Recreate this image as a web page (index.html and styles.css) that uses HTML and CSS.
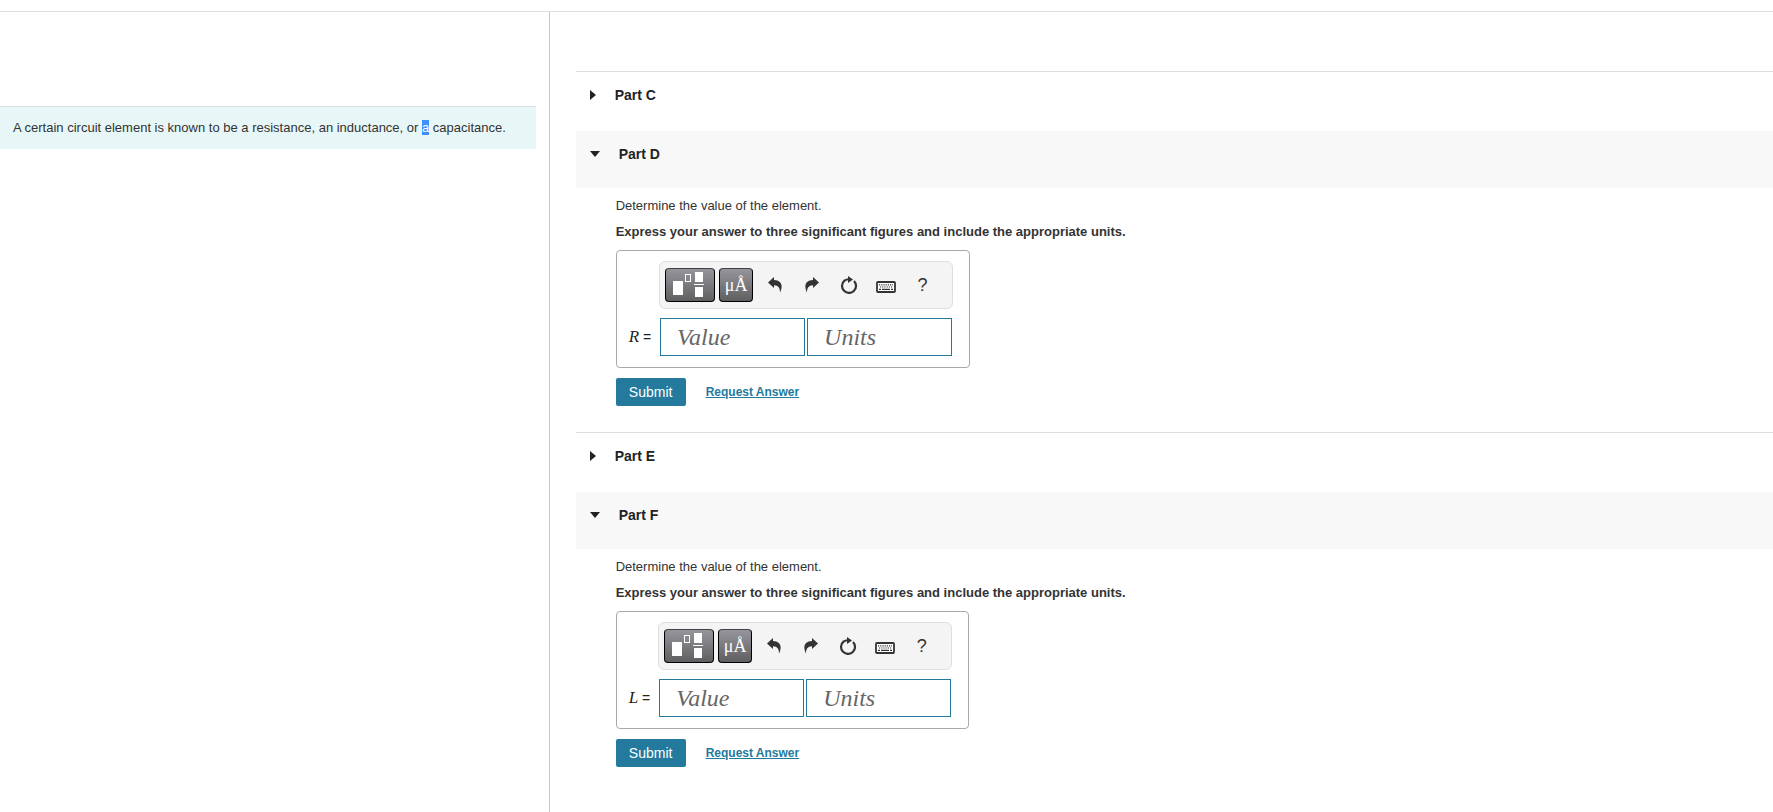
FILE: index.html
```
<!DOCTYPE html>
<html lang="en">

<head>
  <meta charset="utf-8">
  <title>Circuit element</title>
  <link rel="stylesheet" href="styles.css">
</head>
<body>
  <!-- shared icons -->
  <svg class="sprite" aria-hidden="true">
    <symbol id="template" viewBox="0 0 34 28">
      <rect x="0" y="10" width="10" height="14" fill="#fff"/>
      <rect x="12.5" y="3.5" width="5" height="7" fill="none" stroke="#fff"/>
      <rect x="22" y="1" width="8" height="10" fill="#fff"/>
      <rect x="21" y="13" width="10" height="1" fill="#fff"/>
      <rect x="22" y="16" width="8" height="10" fill="#fff"/>
    </symbol>
    <symbol id="undo" viewBox="0 0 14 16">
      <path d="M0 5.5 L6 0 V3 C11 3 14 6 13.6 10 C13.5 12 12.9 13.8 12 15.5 C12 11 10.5 8.4 6 8.2 V11 Z"/>
    </symbol>
    <symbol id="redo" viewBox="0 0 14 16">
      <path d="M14 5.5 L8 0 V3 C3 3 0 6 .4 10 C.5 12 1.1 13.8 2 15.5 C2 11 3.5 8.4 8 8.2 V11 Z"/>
    </symbol>
    <symbol id="reset" viewBox="0 0 18 18">
      <path d="M14 5 A7 7 0 1 1 4.5 4.6 Q6.5 3 10 3.3" fill="none" stroke="#333" stroke-width="2.2"/>
      <path d="M8 0 L13 3.6 L8 7 Z"/>
    </symbol>
    <symbol id="keyboard" viewBox="0 0 20 16">
      <rect x="1" y="5" width="18" height="10" rx="1" fill="#fff" stroke="#333" stroke-width="1.8"/>
      <path d="M3 7.8 H17 M4 10 H17" fill="none" stroke="#333" stroke-width="1.2" stroke-dasharray="1.2 1"/>
      <path d="M3 12.3 H5 M6 12.3 H14 M15 12.3 H17" fill="none" stroke="#333" stroke-width="1.2"/>
    </symbol>
    <symbol id="right" viewBox="0 0 6 10">
      <path d="M0 0 L6 5 L0 10 Z"/>
    </symbol>
    <symbol id="down" viewBox="0 0 10 6">
      <path d="M0 0 H10 L5 6 Z"/>
    </symbol>
  </svg>

  <div class="page">
    <aside class="intro">
      <p class="problem">A certain circuit element is known to be a resistance, an inductance, or <span class="selected">a</span> capacitance.</p>
    </aside>

    <main class="parts">
      <section>
        <button class="part-head" aria-expanded="false"><svg class="right"><use href="#right"/></svg>Part C</button>
      </section>

      <section>
        <button class="part-head open" aria-expanded="true"><svg class="down"><use href="#down"/></svg>Part D</button>
        <div class="part-body">
          <p>Determine the value of the element.</p>
          <p class="instruction">Express your answer to three significant figures and include the appropriate units.</p>
          <div class="answer">
            <div class="toolbar">
              <button class="key wide" aria-label="Templates"><svg class="template"><use href="#template"/></svg></button>
              <button class="key">μÅ</button>
              <button class="tool" aria-label="Undo"><svg class="arrow"><use href="#undo"/></svg></button>
              <button class="tool" aria-label="Redo"><svg class="arrow"><use href="#redo"/></svg></button>
              <button class="tool" aria-label="Reset"><svg class="reset"><use href="#reset"/></svg></button>
              <button class="tool" aria-label="Keyboard"><svg class="keyboard"><use href="#keyboard"/></svg></button>
              <button class="tool">?</button>
            </div>
            <label for="valueD"><i>R</i> =</label>
            <div class="fields">
              <input id="valueD" type="text" placeholder="Value">
              <input type="text" placeholder="Units" aria-label="Units">
            </div>
          </div>
          <div class="actions">
            <button class="submit">Submit</button>
            <a href="#">Request Answer</a>
          </div>
        </div>
      </section>

      <section>
        <button class="part-head" aria-expanded="false"><svg class="right"><use href="#right"/></svg>Part E</button>
      </section>

      <section>
        <button class="part-head open" aria-expanded="true"><svg class="down"><use href="#down"/></svg>Part F</button>
        <div class="part-body">
          <p>Determine the value of the element.</p>
          <p class="instruction">Express your answer to three significant figures and include the appropriate units.</p>
          <div class="answer">
            <div class="toolbar">
              <button class="key wide" aria-label="Templates"><svg class="template"><use href="#template"/></svg></button>
              <button class="key">μÅ</button>
              <button class="tool" aria-label="Undo"><svg class="arrow"><use href="#undo"/></svg></button>
              <button class="tool" aria-label="Redo"><svg class="arrow"><use href="#redo"/></svg></button>
              <button class="tool" aria-label="Reset"><svg class="reset"><use href="#reset"/></svg></button>
              <button class="tool" aria-label="Keyboard"><svg class="keyboard"><use href="#keyboard"/></svg></button>
              <button class="tool">?</button>
            </div>
            <label for="valueF"><i>L</i> =</label>
            <div class="fields">
              <input id="valueF" type="text" placeholder="Value">
              <input type="text" placeholder="Units" aria-label="Units">
            </div>
          </div>
          <div class="actions">
            <button class="submit">Submit</button>
            <a href="#">Request Answer</a>
          </div>
        </div>
      </section>
    </main>
  </div>
</body>
</html>
```
FILE: styles.css
```
* {
  box-sizing: border-box;
}
body {
  margin: 0;
  padding-top: 11px;
  background-color: #fff;
  color: #333;
  font-family: "Liberation Sans", Arial, sans-serif;
  font-size: 13px;
  line-height: 18px;
}
p {
  margin: 0;
}
button {
  font-family: inherit;
  border: none;
  padding: 0;
  cursor: pointer;
}
svg {
  display: block;
  fill: #333;
}
.sprite {
  display: none;
}
.page {
  display: grid;
  grid-template-columns: 31fr 69fr;
  min-height: calc(100vh - 11px);
  border-top: 1px solid #dcdfe0;
}

/* left column */
.intro {
  padding: 94px 14px 0 0;
}
.problem {
  padding: 12px 13px;
  border-top: 1px solid #d9dedd;
  background-color: #e7f7f7;
}
.selected {
  background-color: #3e90ff;
  color: #fff;
}

/* right column */
.parts {
  margin-left: -1px;
  border-left: 1px solid #c0c8d6;
  padding: 59px 0 32px 26px;
}
.part-head {
  display: flex;
  align-items: flex-start;
  gap: 19px;
  width: 100%;
  height: 60px;
  padding: 14px;
  border-top: 1px solid #dcdfe0;
  background-color: #fff;
  color: #222;
  font-size: 14px;
  font-weight: bold;
  line-height: 18px;
}
.part-head svg {
  fill: #222;
}
.open {
  height: 57px;
  border-top: none;
  background-color: #f8f8f8;
}
.right {
  width: 6px;
  height: 18px;
}
.down {
  width: 10px;
  height: 18px;
}
.part-body {
  padding: 9px 0 26px 40px;
}
.instruction {
  margin-top: 8px;
  font-weight: bold;
}
.answer {
  display: grid;
  grid-template-columns: auto auto;
  width: max-content;
  align-items: center;
  gap: 9px 8px;
  margin-top: 9px;
  padding: 10px 16px 11px 12px;
  border: 1px solid #a8a8a8;
  border-radius: 4px;
}
.toolbar {
  grid-column: 2;
  display: flex;
  align-items: center;
  gap: 4px;
  height: 48px;
  padding: 0 5px;
  border: 1px solid #dedede;
  border-radius: 6px;
  background-color: #f4f4f4;
}
.key {
  display: flex;
  align-items: center;
  justify-content: center;
  width: 34px;
  height: 34px;
  border: 1px solid #000;
  border-top-color: #444;
  border-radius: 4px;
  background-image: linear-gradient(#96959c, #5f5f61);
  color: #fff;
  font-family: "Liberation Serif", "Times New Roman", serif;
  font-size: 18px;
}
.wide {
  width: 50px;
}
.template {
  width: 34px;
  height: 28px;
}
.tool {
  display: flex;
  justify-content: center;
  width: 33px;
  background-color: transparent;
  color: #333;
  font-size: 18px;
}
.key + .tool {
  margin-left: 1px;
}
.arrow {
  width: 14px;
  height: 16px;
}
.reset {
  width: 18px;
  height: 18px;
}
.keyboard {
  width: 20px;
  height: 16px;
}
.answer label {
  color: #222;
  font-size: 14px;
}
.answer label i {
  font-family: "Liberation Serif", "Times New Roman", serif;
  font-size: 17px;
}
.fields {
  display: flex;
  gap: 2px;
  padding: 0 1px;
}
.fields input {
  width: 145px;
  height: 38px;
  padding: 0 16px;
  border: 1px solid #227a9c;
  font-family: "Liberation Serif", "Times New Roman", serif;
  font-size: 24px;
}
.fields input::placeholder {
  color: #666;
  font-style: italic;
}
.actions {
  display: flex;
  align-items: center;
  gap: 20px;
  margin-top: 10px;
}
.submit {
  width: 70px;
  height: 28px;
  border-radius: 2px;
  background-color: #237a9d;
  color: #fff;
  font-size: 14px;
}
.actions a {
  color: #237a9d;
  font-size: 12px;
  font-weight: bold;
}
```
